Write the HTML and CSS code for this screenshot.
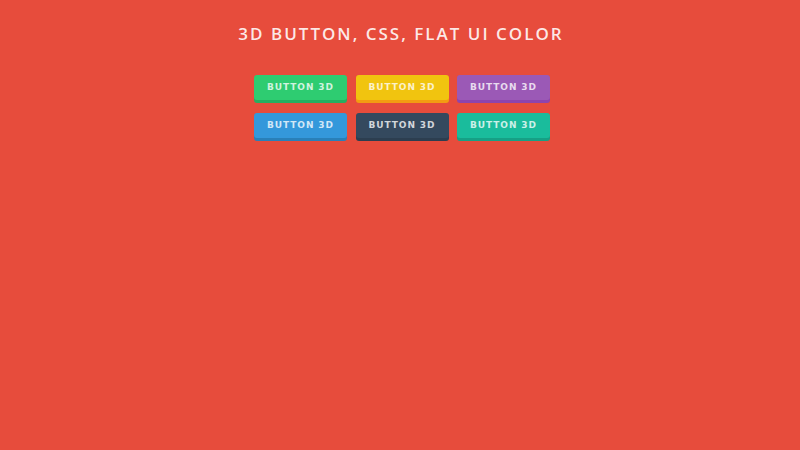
FILE: index.html
```html
<!DOCTYPE html>
<html lang="en">
<head>
    <meta charset="UTF-8">
    <meta name="viewport" content="width=device-width, initial-scale=1.0">
    <title>3D Button, CSS, Flat UI Color</title>
    <link rel="stylesheet" href="styles.css">
</head>
<body>
    <div class="wrapper">
        <h1>3D Button, CSS, Flat UI Color</h1>
        <div class="button-grid">
            <a href="#" class="btn-3d emerald">Button 3D</a>
            <a href="#" class="btn-3d sunflower">Button 3D</a>
            <a href="#" class="btn-3d amethyst">Button 3D</a>
            <a href="#" class="btn-3d peter-river">Button 3D</a>
            <a href="#" class="btn-3d wet-asphalt">Button 3D</a>
            <a href="#" class="btn-3d turquoise">Button 3D</a>
        </div>
    </div>
</body>
</html>
```

FILE: styles.css
```css
body {
    margin: 0;
    padding: 0;
    background: #e74c3c;
    font-family: 'Open Sans', 'DejaVu Sans', sans-serif;
    height: 450px;
}

.wrapper {
    display: flex;
    flex-direction: column;
    align-items: center;
    padding-top: 24px;
}

h1 {
    margin: 0 0 0 2px;
    font-size: 17px;
    line-height: 20px;
    font-weight: 600;
    letter-spacing: 2px;
    text-transform: uppercase;
    color: rgba(255, 255, 255, 0.88);
}

.button-grid {
    display: grid;
    grid-template-columns: repeat(3, 93px);
    column-gap: 8.5px;
    row-gap: 13px;
    margin: 31px 0 0 4px;
}

/* face + darker bottom edge for the 3D look */
.btn-3d {
    display: block;
    height: 25px;
    line-height: 25px;
    text-align: center;
    text-decoration: none;
    text-transform: uppercase;
    font-family: 'DejaVu Sans', sans-serif;
    font-size: 9px;
    font-weight: 700;
    letter-spacing: 0.9px;
    color: rgba(255, 255, 255, 0.78);
    border-radius: 3px;
    transition: all 0.1s ease;
}

.btn-3d:active {
    transform: translateY(3px);
    box-shadow: none;
}

.emerald {
    background: #2ecc71;
    box-shadow: 0 3px 0 #27ae60;
}

.sunflower {
    background: #f1c40f;
    box-shadow: 0 3px 0 #f39c12;
}

.amethyst {
    background: #9b59b6;
    box-shadow: 0 3px 0 #8e44ad;
}

.peter-river {
    background: #3498db;
    box-shadow: 0 3px 0 #2980b9;
}

.wet-asphalt {
    background: #34495e;
    box-shadow: 0 3px 0 #2c3e50;
}

.turquoise {
    background: #1abc9c;
    box-shadow: 0 3px 0 #16a085;
}
```
